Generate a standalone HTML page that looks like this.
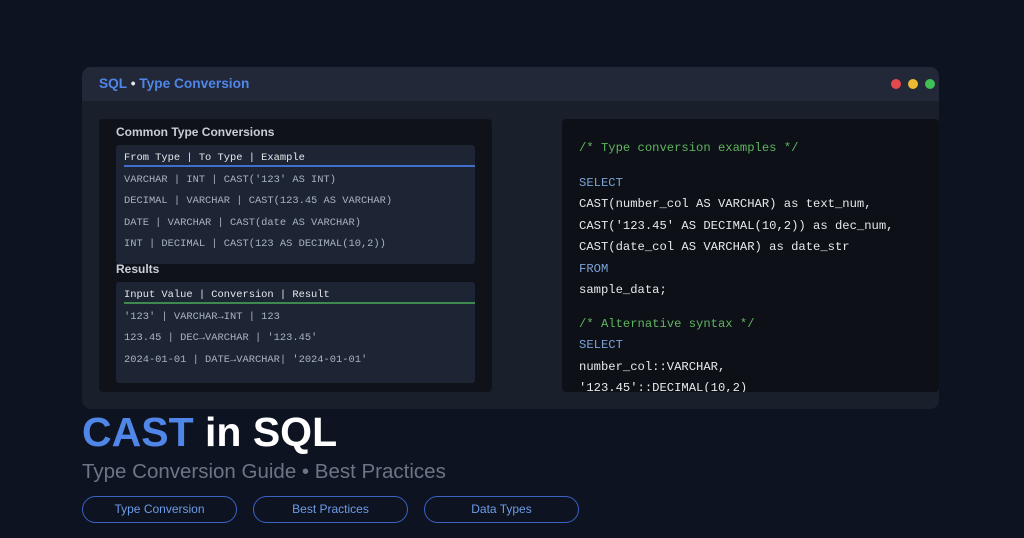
<!DOCTYPE html>
<html><head><style>
*{margin:0;padding:0;box-sizing:border-box}
body{width:1024px;height:538px;background:#0e1321;font-family:"Liberation Sans",sans-serif;position:relative;overflow:hidden}
.win{position:absolute;left:82px;top:67px;width:857px;height:342px;background:#1a1f2c;border-radius:9px;overflow:hidden}
.hdr{height:34px;background:#222838;position:relative}
.hdr .t{position:absolute;left:17px;top:9px;font-size:13.7px;font-weight:bold;color:#4f86e8}
.dot{position:absolute;top:12px;width:10px;height:10px;border-radius:50%}
.lp{position:absolute;left:17px;top:52px;width:393px;height:273px;background:#0f1319;border-radius:4px}
.rp{position:absolute;left:480px;top:52px;width:377px;height:273px;background:#0d1117;border-radius:4px;overflow:hidden}
.h{position:absolute;left:17px;font-size:12px;font-weight:bold;color:#c9ced6}
.tb{position:absolute;left:17px;width:359px;background:#1d2534;border-radius:3px;font-family:"Liberation Mono",monospace;font-size:10.4px;color:#aab2bf}
.tb div{position:absolute;left:8px;white-space:pre}
.tb .th{color:#e5e7eb}
.ln{position:absolute;left:0;right:0;height:1.5px}
.code{position:absolute;left:17px;top:0;font-family:"Liberation Mono",monospace;font-size:12.2px;color:#e6e8eb;white-space:pre}
.code div{position:absolute;left:0}
.c{color:#5fb55f}.k{color:#7aa2d6}
.title{position:absolute;left:82px;top:409px;font-size:41px;font-weight:bold;color:#fff}
.sub{position:absolute;left:82px;top:460px;font-size:20.5px;color:#6c7585}
.btn{position:absolute;top:496px;width:155px;height:27px;border:1px solid #3a63c4;border-radius:14px;color:#6d9ce8;font-size:12px;text-align:center;line-height:25px}
</style></head><body>
<div class="win">
 <div class="hdr"><div class="t">SQL <span style="color:#e5e7eb">•</span> Type Conversion</div>
  <div class="dot" style="left:809px;background:#e5484d"></div>
  <div class="dot" style="left:826px;background:#e8b931"></div>
  <div class="dot" style="left:843px;background:#3fbf56"></div>
 </div>
 <div class="lp">
  <div class="h" style="top:6px">Common Type Conversions</div>
  <div class="tb" style="top:26px;height:119px">
   <div class="th" style="top:7px">From Type | To Type | Example</div>
   <div class="ln" style="top:20px;background:#3f6fc8"></div>
   <div style="top:29px">VARCHAR | INT | CAST('123' AS INT)</div>
   <div style="top:50px">DECIMAL | VARCHAR | CAST(123.45 AS VARCHAR)</div>
   <div style="top:72px">DATE | VARCHAR | CAST(date AS VARCHAR)</div>
   <div style="top:93px">INT | DECIMAL | CAST(123 AS DECIMAL(10,2))</div>
  </div>
  <div class="h" style="top:143px">Results</div>
  <div class="tb" style="top:163px;height:101px">
   <div class="th" style="top:7px">Input Value | Conversion | Result</div>
   <div class="ln" style="top:20px;background:#3d8a4f"></div>
   <div style="top:29px">'123' | VARCHAR→INT | 123</div>
   <div style="top:50px">123.45 | DEC→VARCHAR | '123.45'</div>
   <div style="top:72px">2024-01-01 | DATE→VARCHAR| '2024-01-01'</div>
  </div>
 </div>
 <div class="rp"><div class="code">
  <div class="c" style="top:22px">/* Type conversion examples */</div>
  <div class="k" style="top:57px">SELECT</div>
  <div style="top:78px">CAST(number_col AS VARCHAR) as text_num,</div>
  <div style="top:100px">CAST('123.45' AS DECIMAL(10,2)) as dec_num,</div>
  <div style="top:121px">CAST(date_col AS VARCHAR) as date_str</div>
  <div class="k" style="top:143px">FROM</div>
  <div style="top:164px">sample_data;</div>
  <div class="c" style="top:198px">/* Alternative syntax */</div>
  <div class="k" style="top:219px">SELECT</div>
  <div style="top:241px">number_col::VARCHAR,</div>
  <div style="top:262px">'123.45'::DECIMAL(10,2)</div>
 </div></div>
</div>
<div class="title"><span style="color:#4f86e8">CAST</span> in SQL</div>
<div class="sub">Type Conversion Guide • Best Practices</div>
<div class="btn" style="left:82px">Type Conversion</div>
<div class="btn" style="left:253px">Best Practices</div>
<div class="btn" style="left:424px">Data Types</div>
</body></html>
